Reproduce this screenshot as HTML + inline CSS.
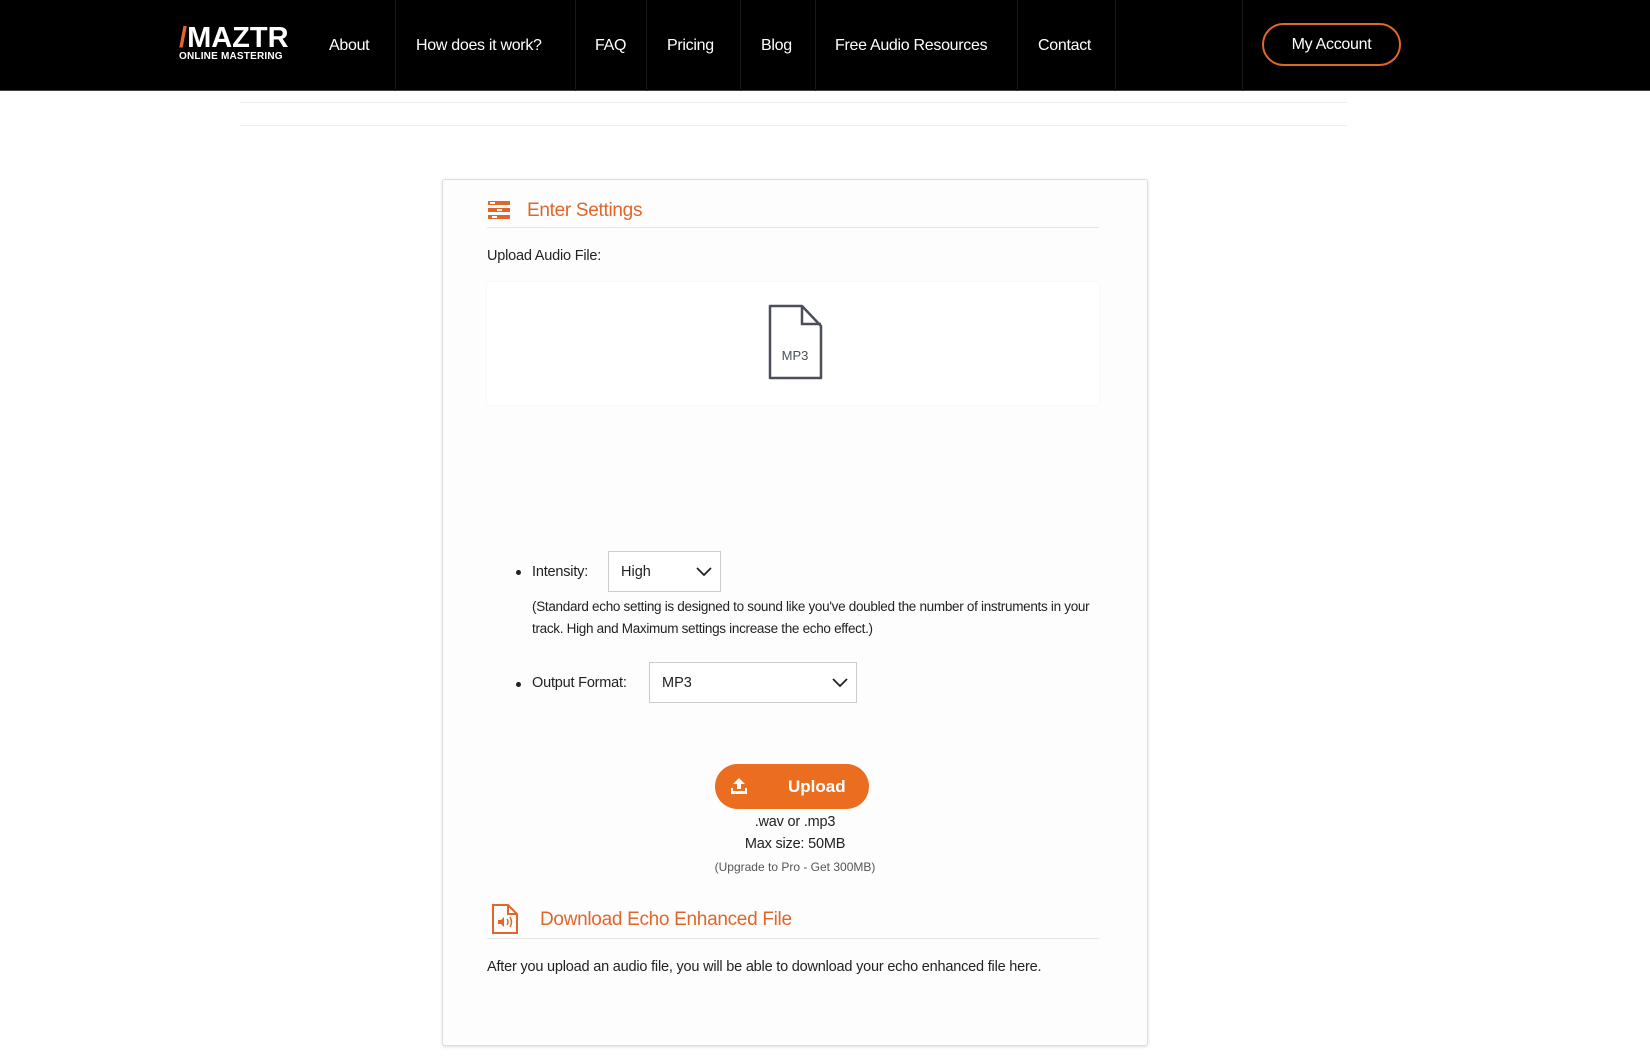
<!DOCTYPE html>
<html><head><meta charset="utf-8"><style>
*{box-sizing:border-box;margin:0;padding:0}
body{width:1650px;height:1062px;background:#fff;font-family:"Liberation Sans",sans-serif;color:#222;position:relative;overflow:hidden}
.nav{position:absolute;left:0;top:0;width:1650px;height:91px;background:#000;border-bottom:1px solid #444}
.nav a{position:absolute;top:37px;color:#fff;font-size:16px;text-decoration:none;letter-spacing:-0.3px}
.sep{position:absolute;top:0;width:1px;height:91px;background:#1a1a1a}
.logo{position:absolute;left:179px;top:25px;color:#fff;font-weight:bold}
.acct{position:absolute;left:1262px;top:23px;width:139px;height:43px;border:2px solid #e0662a;border-radius:22px;color:#fff;font-size:16px;text-align:center;line-height:39px;letter-spacing:-0.3px}
.hl{position:absolute;left:240px;width:1107px;height:1px;background:#eee}
.card{position:absolute;left:442px;top:179px;width:706px;height:867px;border:1px solid #ddd;border-radius:3px;box-shadow:0 1px 3px rgba(0,0,0,.12);background:#fdfdfd}
.abs{position:absolute}
.or{color:#e0662a}
.t{font-size:14.5px;color:#222;letter-spacing:-0.2px}
.sel{position:absolute;border:1px solid #ccc;background:#fff;font-size:14.5px;padding-left:12px;line-height:41px}
.sel svg{position:absolute;right:8px;top:15px}
</style></head><body>
<div class="nav">
<div class="logo"><div style="font-size:29px;line-height:27px;letter-spacing:0px"><span style="color:#e0662a">/</span>MAZTR</div><div style="font-size:10px;line-height:10px;letter-spacing:0.2px">ONLINE MASTERING</div></div>
<a style="left:329px">About</a>
<div class="sep" style="left:395px"></div>
<a style="left:416px">How does it work?</a>
<div class="sep" style="left:575px"></div>
<a style="left:595px">FAQ</a>
<div class="sep" style="left:646px"></div>
<a style="left:667px">Pricing</a>
<div class="sep" style="left:740px"></div>
<a style="left:761px">Blog</a>
<div class="sep" style="left:815px"></div>
<a style="left:835px">Free Audio Resources</a>
<div class="sep" style="left:1017px"></div>
<a style="left:1038px">Contact</a>
<div class="sep" style="left:1115px"></div>
<div class="sep" style="left:1242px"></div>
<div class="acct">My Account</div>
</div>
<div class="hl" style="top:102px"></div>
<div class="hl" style="top:125px"></div>
<div class="card"></div>
<svg class="abs" style="left:488px;top:201px" width="22" height="18"><rect x="0" y="0" width="22" height="4" fill="#e0662a"/><rect x="0" y="7" width="22" height="4" fill="#e0662a"/><rect x="0" y="14" width="22" height="4" fill="#e0662a"/><rect x="2" y="1" width="5" height="2" fill="#fff"/><rect x="9" y="8" width="5" height="2" fill="#fff"/><rect x="4" y="15" width="5" height="2" fill="#fff"/></svg>
<div class="abs or" style="left:527px;top:200px;font-size:19px;letter-spacing:-0.3px">Enter Settings</div>
<div class="abs" style="left:487px;top:227px;width:612px;height:1px;background:#e6e6e6"></div>
<div class="abs t" style="left:487px;top:248px">Upload Audio File:</div>
<div class="abs" style="left:487px;top:282px;width:612px;height:123px;background:#fff;box-shadow:0 0 3px rgba(0,0,0,.05)"></div>
<svg class="abs" style="left:766px;top:304px" width="58" height="78"><path d="M4 2 H36 L55 22 V74 H4 Z" fill="none" stroke="#4a4f5a" stroke-width="2.5" stroke-linejoin="round"/><path d="M36 2 V20 H55" fill="none" stroke="#4a4f5a" stroke-width="2.5"/><text x="29" y="56" text-anchor="middle" font-size="13" fill="#4a4f5a" font-family="Liberation Sans">MP3</text></svg>
<div class="abs" style="left:516px;top:570px;width:5px;height:5px;border-radius:50%;background:#222"></div>
<div class="abs t" style="left:532px;top:564px">Intensity:</div>
<div class="sel" style="left:608px;top:551px;width:113px;height:41px">High<svg width="16" height="10"><path d="M1 1 L8 8 L15 1" fill="none" stroke="#222" stroke-width="1.8"/></svg></div>
<div class="abs t" style="left:532px;top:596px;font-size:13.5px;line-height:22px;width:580px;letter-spacing:-0.3px">(Standard echo setting is designed to sound like you've doubled the number of instruments in your track. High and Maximum settings increase the echo effect.)</div>
<div class="abs" style="left:516px;top:682px;width:5px;height:5px;border-radius:50%;background:#222"></div>
<div class="abs t" style="left:532px;top:675px">Output Format:</div>
<div class="sel" style="left:649px;top:662px;width:208px;height:41px">MP3<svg width="16" height="10"><path d="M1 1 L8 8 L15 1" fill="none" stroke="#222" stroke-width="1.8"/></svg></div>
<div class="abs" style="left:715px;top:764px;width:154px;height:45px;border-radius:23px;background:#eb6d1f"></div>
<svg class="abs" style="left:730px;top:777px" width="18" height="18"><path d="M9 1 L3 7 H7 V12 H11 V7 H15 Z" fill="#fff"/><path d="M1 11 V17 H17 V11 H15 V14 H3 V11 Z" fill="#fff"/></svg>
<div class="abs" style="left:788px;top:777px;color:#fff;font-size:17px;font-weight:bold">Upload</div>
<div class="abs t" style="left:0;width:1590px;text-align:center;top:814px">.wav or .mp3</div>
<div class="abs t" style="left:0;width:1590px;text-align:center;top:836px">Max size: 50MB</div>
<div class="abs" style="left:0;width:1590px;text-align:center;top:860px;font-size:12px;color:#555">(Upgrade to Pro - Get 300MB)</div>
<svg class="abs" style="left:491px;top:903px" width="28" height="32"><path d="M2 2 H17 L26 11 V30 H2 Z" fill="none" stroke="#e0662a" stroke-width="2"/><path d="M17 2 V11 H26" fill="none" stroke="#e0662a" stroke-width="2"/><path d="M7 17 H10 L13 14 V24 L10 21 H7 Z" fill="#e0662a"/><path d="M16 16 Q18 19 16 22 M19 14 Q22 19 19 24" fill="none" stroke="#e0662a" stroke-width="1.5"/></svg>
<div class="abs or" style="left:540px;top:909px;font-size:19px;letter-spacing:-0.3px">Download Echo Enhanced File</div>
<div class="abs" style="left:487px;top:938px;width:612px;height:1px;background:#e6e6e6"></div>
<div class="abs t" style="left:487px;top:959px">After you upload an audio file, you will be able to download your echo enhanced file here.</div>
</body></html>
